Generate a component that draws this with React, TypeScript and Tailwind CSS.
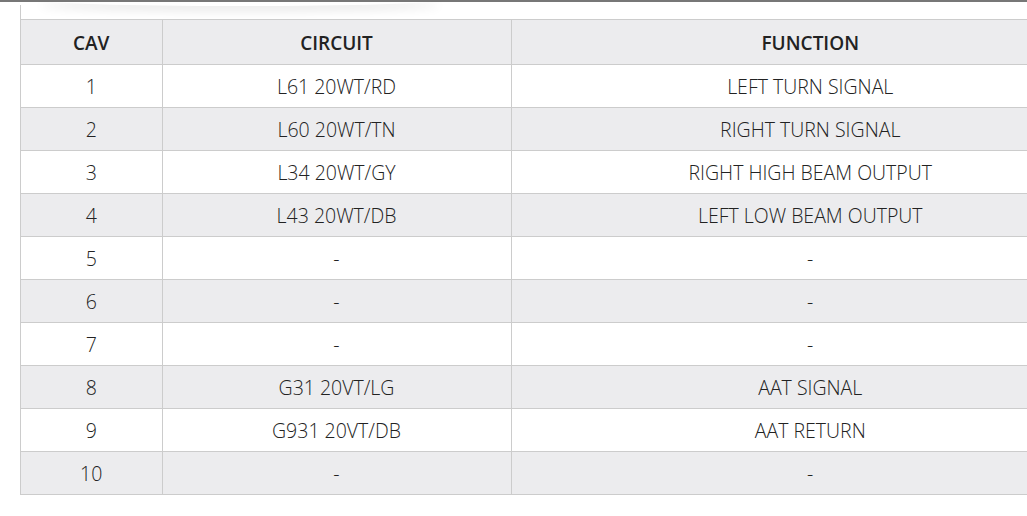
import React from 'react';

interface Row {
  cav: string;
  circuit: string;
  fn: string;
}

const ROWS: Row[] = [
  { cav: '1', circuit: 'L61 20WT/RD', fn: 'LEFT TURN SIGNAL' },
  { cav: '2', circuit: 'L60 20WT/TN', fn: 'RIGHT TURN SIGNAL' },
  { cav: '3', circuit: 'L34 20WT/GY', fn: 'RIGHT HIGH BEAM OUTPUT' },
  { cav: '4', circuit: 'L43 20WT/DB', fn: 'LEFT LOW BEAM OUTPUT' },
  { cav: '5', circuit: '-', fn: '-' },
  { cav: '6', circuit: '-', fn: '-' },
  { cav: '7', circuit: '-', fn: '-' },
  { cav: '8', circuit: 'G31 20VT/LG', fn: 'AAT SIGNAL' },
  { cav: '9', circuit: 'G931 20VT/DB', fn: 'AAT RETURN' },
  { cav: '10', circuit: '-', fn: '-' },
];

export default function App() {
  return (
    <div
      className="w-[1027px] h-[516px] overflow-hidden bg-white text-[#222]"
      style={{ fontFamily: '"Open Sans", "Liberation Sans", sans-serif' }}
    >
      <div className="h-[2px] bg-[#777]" />
      <div className="relative pl-[20px] pt-[3px]">
        {/* soft shadow under the top bar */}
        <div className="absolute left-[40px] top-[-8px] w-[400px] h-[12px] rounded-[50%] shadow-[0_6px_10px_rgba(0,0,0,0.08)]" />
        <div className="border-l border-[#ccc] pt-[14px] w-[1089px]">
          <table className="border-collapse w-full text-[19.5px] font-[350] table-fixed">
            <thead>
              <tr className="bg-[#ececee] h-[45px] border-t border-b border-[#ccc] text-[19px]">
                <th className="w-[141px] pt-[2px] font-semibold border-r border-[#ccc]">CAV</th>
                <th className="w-[349px] pt-[2px] font-semibold border-r border-[#ccc]">CIRCUIT</th>
                <th className="pt-[2px] font-semibold">FUNCTION</th>
              </tr>
            </thead>
            <tbody>
              {ROWS.map((r, i) => (
                <tr
                  key={r.cav}
                  className={`h-[43px] border-b border-[#ccc] ${i % 2 === 1 ? 'bg-[#ececee]' : 'bg-white'}`}
                >
                  <td className="pt-[2px] text-center border-r border-[#ccc]">{r.cav}</td>
                  <td className="pt-[2px] text-center border-r border-[#ccc]">{r.circuit}</td>
                  <td className="pt-[2px] text-center">{r.fn}</td>
                </tr>
              ))}
            </tbody>
          </table>
        </div>
      </div>
    </div>
  );
}
